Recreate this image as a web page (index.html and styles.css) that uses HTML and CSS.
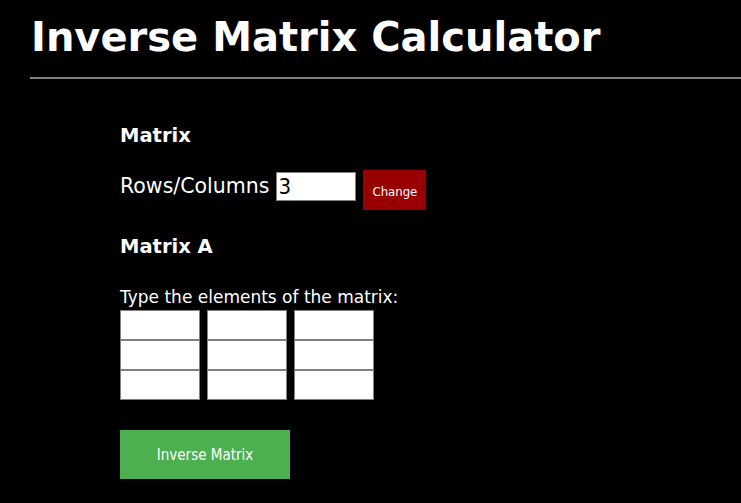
FILE: index.html
```html
<!DOCTYPE html>
<html lang="en">
  <head>
    <meta charset="UTF-8" />
    <meta name="viewport" content="width=device-width, initial-scale=1.0" />
    <title>Inverse Matrix Calculator</title>
    <link rel="stylesheet" href="styles.css">
  </head>
  <body>
    <div class="page">
      <h1 class="title">Inverse Matrix Calculator</h1>
      <hr class="rule">
      <div class="content">
        <h3 class="section">Matrix</h3>
        <div class="size-row">
          <label for="size" class="size-label">Rows/Columns</label>
          <input type="text" id="size" class="size-input" value="3">
          <button type="button" class="change">Change</button>
        </div>
        <h3 class="section section-a">Matrix A</h3>
        <p class="hint">Type the elements of the matrix:</p>
        <div class="matrix">
          <div class="col">
            <input type="text" class="cell">
            <input type="text" class="cell">
            <input type="text" class="cell">
          </div>
          <div class="col">
            <input type="text" class="cell">
            <input type="text" class="cell">
            <input type="text" class="cell">
          </div>
          <div class="col">
            <input type="text" class="cell">
            <input type="text" class="cell">
            <input type="text" class="cell">
          </div>
        </div>
        <button type="button" class="inverse">Inverse Matrix</button>
      </div>
    </div>
  </body>
</html>
```

FILE: styles.css
```css
body {
  margin: 0;
  background-color: #000;
  color: #fff;
  font-family: "DejaVu Sans", sans-serif;
}
.page {
  padding-left: 30px;
  padding-top: 12px;
}
.title {
  margin: 0 0 0 1px;
  font-size: 40px;
  line-height: 50px;
  font-weight: bold;
}
.rule {
  margin: 15px 0 0 0;
  border: none;
  border-top: 2px solid #808080;
}
.content {
  padding-left: 90px;
}
.section {
  margin: 45px 0 0 0;
  font-size: 19.5px;
  line-height: 24px;
}
.size-row {
  display: flex;
  align-items: flex-start;
  margin-top: 22px;
  font-size: 20.5px;
}
.size-label {
  margin-top: 2px;
  line-height: 29px;
}
.size-input {
  width: 80px;
  height: 29px;
  box-sizing: border-box;
  margin: 2px 0 0 7px;
  border: 1px solid #808080;
  padding: 0 1px;
  font-family: "DejaVu Sans Condensed", "DejaVu Sans", sans-serif;
  font-size: 22px;
}
.change {
  width: 63px;
  height: 40px;
  margin-left: 7px;
  border: none;
  background-color: #990000;
  color: #fff;
  font-family: "DejaVu Sans Condensed", "DejaVu Sans", sans-serif;
  font-size: 13px;
  padding: 2px 0 0 0;
}
.section-a {
  margin-top: 25px;
}
.hint {
  margin: 28px 0 0 0;
  font-size: 17px;
  line-height: 20px;
}
.matrix {
  display: flex;
  gap: 7px;
  margin-top: 3px;
}
.col {
  display: flex;
  flex-direction: column;
}
.cell {
  width: 80px;
  height: 30px;
  box-sizing: border-box;
  border: 1px solid #808080;
  margin: 0;
}
.inverse {
  display: block;
  margin-top: 30px;
  width: 170px;
  height: 49px;
  border: none;
  background-color: #4caf50;
  color: #fff;
  font-family: "DejaVu Sans Condensed", "DejaVu Sans", sans-serif;
  font-size: 15px;
}
```
